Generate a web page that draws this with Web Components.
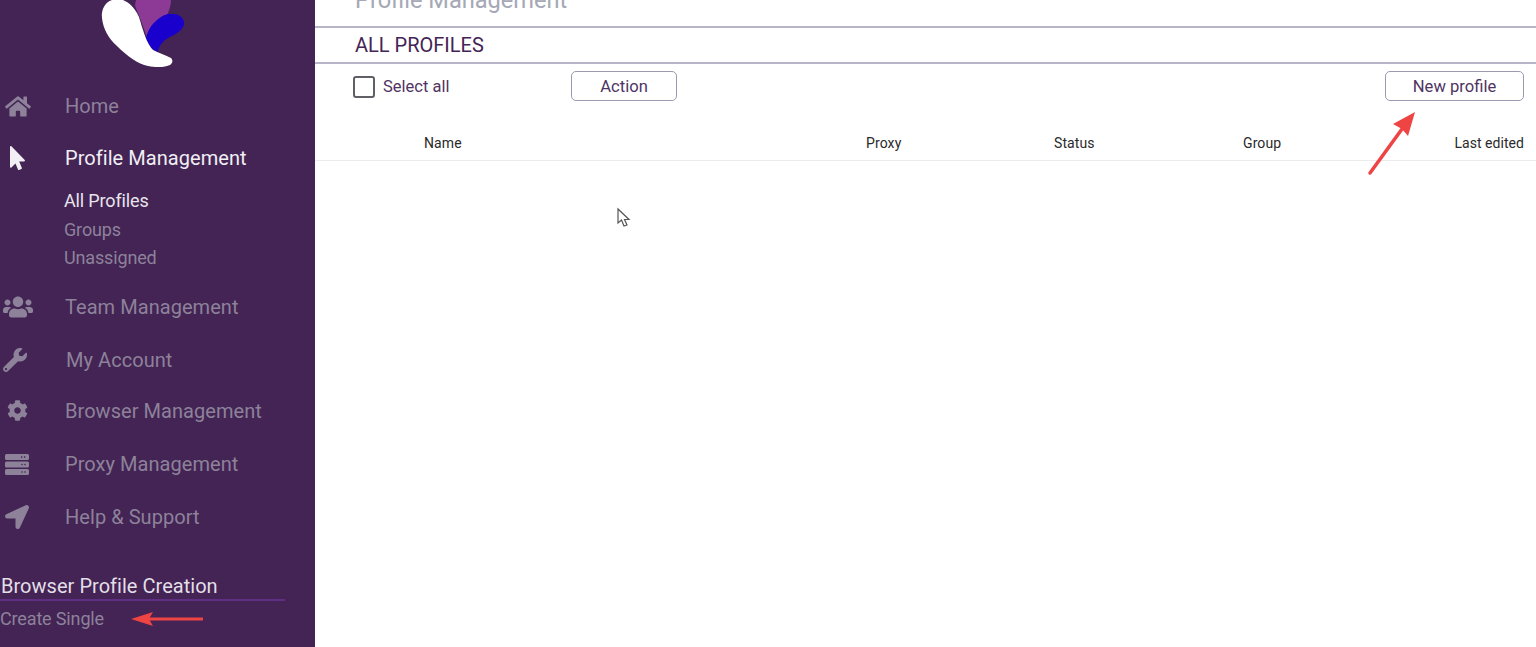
<!DOCTYPE html>
<html lang="en">
<head>
<meta charset="utf-8">
<title>All Profiles</title>
<style>
  html, body { margin: 0; height: 647px; overflow: hidden; background: #fff; font-family: Roboto, "Liberation Sans", sans-serif; }
</style>
</head>
<body>
<app-shell>
  <side-nav slot="side">
    <nav-item icon="home" label="Home"></nav-item>
    <nav-item icon="pointer" label="Profile Management" active dy="-1"></nav-item>
    <sub-nav>
      <span class="on">All Profiles</span>
      <span>Groups</span>
      <span>Unassigned</span>
    </sub-nav>
    <nav-item icon="users" label="Team Management"></nav-item>
    <nav-item icon="wrench" label="My Account" dy="1"></nav-item>
    <nav-item icon="cog" label="Browser Management" dy="-1"></nav-item>
    <nav-item icon="server" label="Proxy Management"></nav-item>
    <nav-item icon="arrow" label="Help &amp; Support"></nav-item>
  </side-nav>
  <profile-panel slot="main"></profile-panel>
</app-shell>
<annotation-layer></annotation-layer>

<script>
const ICONS = {
  home: { w: 26, h: 23, box: "0 0 576 512", d: "M280.37 148.26L96 300.11V464a16 16 0 0 0 16 16l112.06-.29a16 16 0 0 0 15.92-16V368a16 16 0 0 1 16-16h64a16 16 0 0 1 16 16v95.64a16 16 0 0 0 16 16.05L464 480a16 16 0 0 0 16-16V300L295.67 148.26a12.19 12.19 0 0 0-15.3 0zM571.6 251.47L488 182.56V44.05a12 12 0 0 0-12-12h-56a12 12 0 0 0-12 12v72.61L318.47 43a48 48 0 0 0-61 0L4.34 251.47a12 12 0 0 0-1.6 16.9l25.5 31A12 12 0 0 0 45.15 301l235.22-193.74a12.19 12.19 0 0 1 15.3 0L530.9 301a12 12 0 0 0 16.9-1.6l25.5-31a12 12 0 0 0-1.7-16.93z" },
  pointer: { w: 15, h: 24, box: "0 0 320 512", d: "M302.189 329.126H196.105l55.831 135.993c3.889 9.428-.555 19.999-9.444 23.999l-49.165 21.427c-9.165 4-19.443-.571-23.332-9.714l-53.053-129.136-86.664 89.138C18.729 472.71 0 463.554 0 447.977V18.299C0 1.899 19.921-6.096 30.277 5.443l284.412 292.542c11.472 11.179 3.007 31.141-12.5 31.141z", shift: -1 },
  users: { w: 30, h: 24, box: "0 0 640 512", d: "M96 224c35.3 0 64-28.7 64-64s-28.7-64-64-64-64 28.7-64 64 28.7 64 64 64zm448 0c35.3 0 64-28.7 64-64s-28.7-64-64-64-64 28.7-64 64 28.7 64 64 64zm32 32h-64c-17.6 0-33.5 7.1-45.1 18.6 40.3 22.1 68.9 62 75.1 109.4h66c17.7 0 32-14.3 32-32v-32c0-35.3-28.7-64-64-64zm-256 0c61.9 0 112-50.1 112-112S381.9 32 320 32 208 82.1 208 144s50.1 112 112 112zm76.8 32h-8.3c-20.8 10-43.9 16-68.5 16s-47.6-6-68.5-16h-8.3C179.6 288 128 339.6 128 403.2V432c0 26.5 21.5 48 48 48h288c26.5 0 48-21.5 48-48v-28.8c0-63.6-51.6-115.2-115.2-115.2zm-223.7-13.4C161.5 263.1 145.6 256 128 256H64c-35.3 0-64 28.7-64 64v32c0 17.7 14.3 32 32 32h65.9c6.3-47.4 34.9-87.3 75.2-109.4z" },
  wrench: { w: 24, h: 24, box: "0 0 512 512", d: "M507.73 109.1c-2.24-9.03-13.54-12.09-20.12-5.51l-74.36 74.36-67.88-11.31-11.31-67.88 74.36-74.36c6.62-6.62 3.43-17.9-5.66-20.16-47.38-11.74-99.55.91-136.58 37.93-39.64 39.64-50.55 97.1-34.05 147.2L18.74 402.76c-24.99 24.99-24.99 65.51 0 90.5 24.99 24.99 65.51 24.99 90.5 0l213.21-213.21c50.12 16.71 107.47 5.68 147.37-34.22 37.07-37.07 49.7-89.32 37.91-136.73zM64 472c-13.25 0-24-10.75-24-24 0-13.26 10.75-24 24-24s24 10.74 24 24c0 13.25-10.75 24-24 24z", shift: -3, nudge: 1 },
  cog: { w: 21, h: 21, box: "0 0 512 512", d: "M487.4 315.7l-42.6-24.6c4.3-23.2 4.3-47 0-70.2l42.6-24.6c4.9-2.8 7.1-8.6 5.5-14-11.1-35.6-30-67.8-54.7-94.6-3.8-4.1-10-5.1-14.8-2.3L380.8 110c-17.9-15.4-38.5-27.3-60.8-35.1V25.8c0-5.6-3.9-10.5-9.4-11.7-36.7-8.2-74.3-7.8-109.2 0-5.5 1.2-9.4 6.1-9.4 11.7V75c-22.2 7.9-42.8 19.8-60.8 35.1L88.7 85.5c-4.9-2.8-11-1.9-14.8 2.3-24.7 26.7-43.6 58.9-54.7 94.6-1.7 5.4.6 11.2 5.5 14L67.3 221c-4.3 23.2-4.3 47 0 70.2l-42.6 24.6c-4.9 2.8-7.1 8.6-5.5 14 11.1 35.6 30 67.8 54.7 94.6 3.8 4.1 10 5.1 14.8 2.3l42.6-24.6c17.9 15.4 38.5 27.3 60.8 35.1v49.2c0 5.6 3.9 10.5 9.4 11.7 36.7 8.2 74.3 7.8 109.2 0 5.5-1.2 9.4-6.1 9.4-11.7v-49.2c22.2-7.9 42.8-19.8 60.8-35.1l42.6 24.6c4.9 2.8 11 1.9 14.8-2.3 24.7-26.7 43.6-58.9 54.7-94.6 1.5-5.5-.7-11.3-5.6-14.1zM256 336c-44.1 0-80-35.9-80-80s35.9-80 80-80 80 35.9 80 80-35.9 80-80 80z", shift: -.5 },
  server: { w: 24, h: 21, box: "0 0 24 21", d: "M1.5 0h21A1.5 1.5 0 0 1 24 1.5v3A1.5 1.5 0 0 1 22.5 6h-21A1.5 1.5 0 0 1 0 4.5v-3A1.5 1.5 0 0 1 1.5 0zM17 2.3a.8.8 0 1 0 0 1.5.8.8 0 0 0 0-1.5zm3 0a.8.8 0 1 0 0 1.5.8.8 0 0 0 0-1.5zM1.5 7.5h21A1.5 1.5 0 0 1 24 9v3a1.5 1.5 0 0 1-1.5 1.5h-21A1.5 1.5 0 0 1 0 12V9a1.5 1.5 0 0 1 1.5-1.5zM17 9.7a.8.8 0 1 0 0 1.6.8.8 0 0 0 0-1.6zm3 0a.8.8 0 1 0 0 1.6.8.8 0 0 0 0-1.6zM1.5 15h21a1.5 1.5 0 0 1 1.5 1.5v3a1.5 1.5 0 0 1-1.5 1.5h-21A1.5 1.5 0 0 1 0 19.5v-3A1.5 1.5 0 0 1 1.5 15zM17 17.2a.8.8 0 1 0 0 1.6.8.8 0 0 0 0-1.6zm3 0a.8.8 0 1 0 0 1.6.8.8 0 0 0 0-1.6z", shift: -1 },
  arrow: { w: 24, h: 24, box: "0 0 512 512", d: "M444.52 3.52L28.74 195.42c-47.97 22.39-31.98 92.75 19.19 92.75h175.91v175.91c0 51.17 70.36 67.17 92.75 19.19l191.9-415.78c15.99-38.39-25.59-79.97-63.97-63.97z", shift: -1 }
};

class AppShell extends HTMLElement {
  constructor() {
    super();
    this.attachShadow({ mode: "open" });
    this.shadowRoot.innerHTML = `
      <style>
        :host { display: flex; width: 1536px; height: 647px; overflow: hidden; }
        ::slotted([slot=side]) { flex: 0 0 315px; }
        ::slotted([slot=main]) { flex: 1; min-width: 0; }
      </style>
      <slot name="side"></slot>
      <slot name="main"></slot>
    `;
  }
}
customElements.define("app-shell", AppShell);

class SideNav extends HTMLElement {
  constructor() {
    super();
    this.attachShadow({ mode: "open" });
    this.shadowRoot.innerHTML = `
      <style>
        :host { display: flex; flex-direction: column; height: 647px; background: #432454; overflow: hidden; }
        .logo { display: block; height: 80px; flex: none; }
        .create { margin-top: 31px; }
        .create h4 { margin: 0; padding: 0 0 0 1px; width: 285px; box-sizing: border-box; height: 27px; line-height: 24px; font-size: 20px; font-weight: 400; letter-spacing: .03px; color: #e3dfe8; border-bottom: 2px solid #5f2f86; }
        .create span { display: block; margin-top: 6px; line-height: 24px; font-size: 18px; letter-spacing: -.15px; color: #8d829a; }
      </style>
      <svg class="logo" width="315" height="80" viewBox="0 0 315 80">
        <path fill="#8d3a96" d="M136 0H171C171 6 169 11 167 15L148 40L140 18C138 12 136 9 135 5Z"/>
        <path fill="#1a00cc" d="M146 38C148 29 153 22 161 17C167 13 175 13 180 16C184 19 185 24 183 27C180 32 174 35 168 38C163 41 159 45 158 52C152 50 148 44 146 38Z"/>
        <path fill="#fff" d="M112 0H123C130 3 134 8 137 13C140 18 141 25 143 30C145 36 148 45 153 50C158 53 166 55 171 58C173 60 173 63 170 65C166 67 157 68 148 66C138 64 127 56 117 46C109 39 103 29 102 18C101 10 105 2 112 0Z"/>
      </svg>
      <slot></slot>
      <div class="create">
        <h4>Browser Profile Creation</h4>
        <span>Create Single</span>
      </div>
    `;
  }
}
customElements.define("side-nav", SideNav);

class NavItem extends HTMLElement {
  constructor() {
    super();
    this.attachShadow({ mode: "open" });
  }
  connectedCallback() {
    const ic = ICONS[this.getAttribute("icon")];
    const active = this.hasAttribute("active");
    // dy moves the row content a pixel without moving the rows after it
    const dy = Number(this.getAttribute("dy") || 0);
    this.shadowRoot.innerHTML = `
      <style>
        :host { display: flex; align-items: center; box-sizing: border-box; height: 52.5px; padding: ${dy > 0 ? dy * 2 : 0}px 0 ${dy < 0 ? -dy * 2 : 0}px; color: ${active ? "#f1eef4" : "#8d829a"}; }
        .ic { flex: 0 0 36px; display: flex; justify-content: center; }
        svg { display: block; fill: currentColor; position: relative; left: ${ic.shift || 0}px; }
        .t { margin-left: ${29 + (ic.nudge || 0)}px; font-size: 20px; letter-spacing: .05px; white-space: nowrap; }
      </style>
      <span class="ic"><svg width="${ic.w}" height="${ic.h}" viewBox="${ic.box}"><path d="${ic.d}"/></svg></span>
      <span class="t">${this.getAttribute("label").replace("&", "&amp;")}</span>
    `;
  }
}
customElements.define("nav-item", NavItem);

class SubNav extends HTMLElement {
  constructor() {
    super();
    this.attachShadow({ mode: "open" });
    this.shadowRoot.innerHTML = `
      <style>
        :host { display: flex; flex-direction: column; padding: 2.2px 0 7.8px 64px; font-size: 18px; line-height: 28.5px; letter-spacing: -.15px; color: #8d829a; }
        ::slotted(.on) { color: #e8e4ec; }
      </style>
      <slot></slot>
    `;
  }
}
customElements.define("sub-nav", SubNav);

class OutlineButton extends HTMLElement {
  constructor() {
    super();
    this.attachShadow({ mode: "open" });
    this.shadowRoot.innerHTML = `
      <style>
        :host { display: inline-flex; align-items: center; justify-content: center; box-sizing: border-box; height: 30px; border: 1px solid #9f98b2; border-radius: 5px; font-size: 16.6px; color: #4f3463; background: #fff; }
      </style>
      <slot></slot>
    `;
  }
}
customElements.define("outline-button", OutlineButton);

class ProfilePanel extends HTMLElement {
  constructor() {
    super();
    this.attachShadow({ mode: "open" });
    this.shadowRoot.innerHTML = `
      <style>
        :host { display: block; background: #fff; color: #432454; overflow: hidden; height: 647px; }
        h1 { margin: -14px 0 0; padding-left: 40px; height: 42px; box-sizing: border-box; line-height: 28px; font-size: 23.6px; font-weight: 400; color: #a5a8b5; border-bottom: 2px solid #b9b5c8; }
        h2 { margin: 0; padding-left: 40px; height: 36px; box-sizing: border-box; line-height: 34px; font-size: 20px; font-weight: 400; border-bottom: 2px solid #b9b5c8; }
        .tools { display: flex; align-items: center; padding: 7px 12px 0 38px; }
        .box { flex: none; width: 18px; height: 18px; margin-top: 1px; border: 2px solid #5f5f66; border-radius: 3px; }
        .lbl { margin-left: 8px; width: 188px; font-size: 16.5px; color: #4f3463; }
        .act { width: 106px; }
        .new { width: 139px; margin-left: auto; }
        .head { display: grid; grid-template-columns: 442px 188px 189px 100px 1fr; margin-top: 21px; padding: 4px 12px 0 109px; height: 39px; box-sizing: border-box; align-items: center; border-bottom: 1px solid #ececec; font-size: 14px; color: #2a2a2a; letter-spacing: .1px; }
        .head span:last-child { text-align: right; letter-spacing: .05px; }
      </style>
      <h1>Profile Management</h1>
      <h2>ALL PROFILES</h2>
      <div class="tools">
        <span class="box"></span>
        <span class="lbl">Select all</span>
        <outline-button class="act">Action</outline-button>
        <outline-button class="new">New profile</outline-button>
      </div>
      <div class="head">
        <span>Name</span><span>Proxy</span><span>Status</span><span>Group</span><span>Last edited</span>
      </div>
    `;
  }
}
customElements.define("profile-panel", ProfilePanel);

// red arrows and the mouse cursor drawn on top of the screenshot
class AnnotationLayer extends HTMLElement {
  constructor() {
    super();
    this.attachShadow({ mode: "open" });
    this.shadowRoot.innerHTML = `
      <style>
        :host { position: absolute; left: 0; top: 0; width: 1536px; height: 647px; pointer-events: none; }
        svg { display: block; }
      </style>
      <svg width="1536" height="647" viewBox="0 0 1536 647">
        <path fill="none" stroke="#ef4444" stroke-width="3" d="M203 619H146"/>
        <path fill="#ef4444" d="M131 619L153 612L149 619L153 626Z"/>
        <path fill="none" stroke="#ef4444" stroke-width="3.5" stroke-linecap="round" d="M1370 173L1402 129"/>
        <path fill="#ef4444" d="M1415 112L1393 124L1402 129L1408 136Z"/>
        <path fill="#fff" stroke="#555" stroke-width="1.2" d="M618 209V223L621.5 220L624 226L627 225L624.5 219.5L629 219.5Z"/>
      </svg>
    `;
  }
}
customElements.define("annotation-layer", AnnotationLayer);
</script>
</body>
</html>
